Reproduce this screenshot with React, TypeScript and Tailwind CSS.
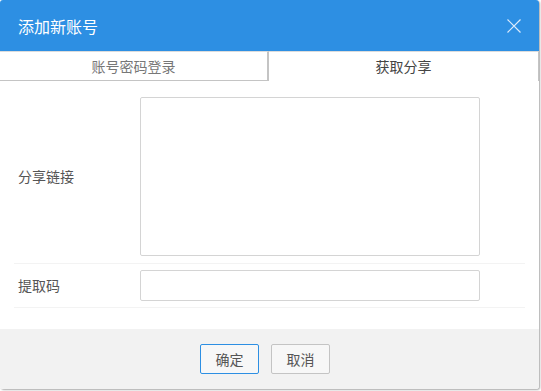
import React from "react";

export default function App() {
  const font = { fontFamily: '"Noto Sans CJK SC", "Noto Sans", sans-serif' };
  return (
    <div className="w-[541px] h-[391px] bg-white" style={font}>
      <div className="w-[539px] h-[389px] rounded-[3px] overflow-hidden flex flex-col bg-white shadow-[1px_1px_2px_rgba(0,0,0,0.35)]">
        <div className="h-[51px] shrink-0 bg-[#2d8fe3] flex items-center justify-between pl-[18px] pr-[18px]">
          <span className="text-white text-[16px] leading-none">添加新账号</span>
          <svg width="16" height="16" viewBox="0 0 16 16" className="mr-[-1px]">
            <path d="M1.5 1.5 L14.5 14.5 M14.5 1.5 L1.5 14.5" stroke="#dbeafb" strokeWidth="1.2" fill="none" />
          </svg>
        </div>
        <div className="h-[30px] shrink-0 flex">
          <div className="w-[269px] border-t border-t-[#dcdcdc] border-b border-b-[#c4c4c4] border-r-2 border-r-[#c4c4c4] flex items-center justify-center text-[14px] text-[#777]">
            账号密码登录
          </div>
          <div className="flex-1 border-t border-t-[#dcdcdc] border-r border-r-[#c4c4c4] flex items-center justify-center text-[14px] text-[#444]">
            获取分享
          </div>
        </div>
        <div className="flex-1 flex flex-col">
          <div className="mx-[14px] pt-[16px] pb-[7px] border-b border-[#f3f3f3] flex items-center">
            <div className="w-[126px] pl-[4px] text-[14px] text-[#555]">分享链接</div>
            <textarea className="w-[340px] h-[159px] border border-[#d4d4d4] rounded-[2px] resize-none outline-none" />
          </div>
          <div className="mx-[14px] py-[6px] border-b border-[#f3f3f3] flex items-center">
            <div className="w-[126px] pl-[4px] text-[14px] text-[#555]">提取码</div>
            <input className="w-[340px] h-[31px] border border-[#d4d4d4] rounded-[2px] outline-none" />
          </div>
        </div>
        <div className="h-[60px] shrink-0 bg-[#f2f2f2] flex items-center justify-center gap-[12px] pr-[9px]">
          <button className="w-[59px] h-[30px] border border-[#2d8fe3] rounded-[2px] bg-[#f7f7f7] text-[14px] text-[#555]">确定</button>
          <button className="w-[59px] h-[30px] border border-[#c4c4c4] rounded-[2px] bg-[#f7f7f7] text-[14px] text-[#555]">取消</button>
        </div>
      </div>
    </div>
  );
}
